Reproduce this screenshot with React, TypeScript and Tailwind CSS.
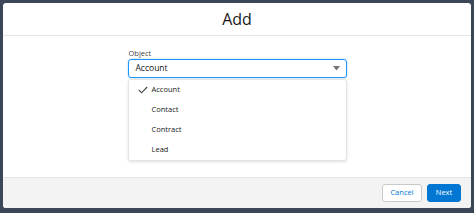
import React from "react";

export default function App() {
  const items = ["Account", "Contact", "Contract", "Lead"];
  return (
    <div
      className="w-[474px] h-[213px] bg-[#3b4656] pt-[3px] pl-[3px] pr-[3px] pb-[5px] flex"
      style={{ fontFamily: '"Open Sans", "Noto Sans", sans-serif' }}
    >
      <div className="flex-1 flex flex-col bg-white rounded-[3px] overflow-hidden">
        <div className="h-[33px] flex items-center justify-center border-b border-[#e5e5e5]">
          <span className="text-[16px] text-[#181818] leading-none">Add</span>
        </div>
        <div className="flex-1 flex justify-center pt-[12px]">
          <div className="w-[219px] flex flex-col">
            <span className="text-[7.5px] text-[#444] leading-[10px] ml-[1px]">Object</span>
            <div className="mt-[1px] h-[19px] border border-[#1b96ff] rounded-[3px] flex items-center justify-between pl-[7px] pr-[6px] shadow-[0_0_2px_#9cc8f0]">
              <span className="text-[8.5px] text-[#181818]">Account</span>
              <svg width="7" height="5" viewBox="0 0 7 5">
                <path d="M0 0 L7 0 L3.5 4.5 Z" fill="#747474" />
              </svg>
            </div>
            <div className="mt-[1px] border border-[#e5e5e5] rounded-[3px] bg-white shadow-[0_1px_3px_rgba(0,0,0,0.12)]">
              {items.map((it, i) => (
                <div key={it} className="h-[20px] flex items-center">
                  <div className="w-[22px] flex justify-end pr-[3px]">
                    {i === 0 && (
                      <svg width="10" height="8" viewBox="0 0 10 8">
                        <path d="M0.8 4 L3.6 6.8 L9.2 1" stroke="#444" strokeWidth="1.1" fill="none" />
                      </svg>
                    )}
                  </div>
                  <span className="text-[7.5px] text-[#181818] ml-[1px]">{it}</span>
                </div>
              ))}
            </div>
          </div>
        </div>
        <div className="h-[31px] bg-[#f3f3f3] border-t border-[#e5e5e5] flex items-center justify-end pr-[10px] gap-[5px]">
          <button className="h-[18px] w-[40px] bg-white border border-[#c9c9c9] rounded-[3px] text-[7.5px] text-[#0176d3]">
            Cancel
          </button>
          <button className="h-[18px] w-[34px] bg-[#0176d3] border border-[#0176d3] rounded-[3px] text-[7.5px] text-white">
            Next
          </button>
        </div>
      </div>
    </div>
  );
}
